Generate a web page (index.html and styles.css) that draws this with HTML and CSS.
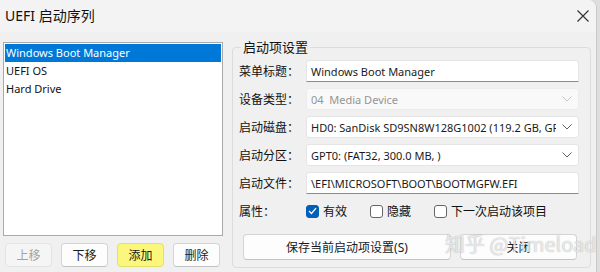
FILE: index.html
```html
<!doctype html>
<html lang="zh-CN">
<head>
  <meta charset="utf-8">
  <link rel="stylesheet" href="styles.css">
</head>
<body>

  <div class="window">
    <div class="titlebar">
      <span class="title">UEFI 启动序列</span>
      <span class="close">
        <svg width="12" height="12" viewBox="0 0 12 12"><path d="M0.5 0.5 L11.5 11.5 M11.5 0.5 L0.5 11.5" stroke="#333" stroke-width="1.2" fill="none"/></svg>
      </span>
    </div>

    <div class="main">
      <div class="left">
        <ul class="listbox">
          <li class="selected">Windows Boot Manager</li>
          <li>UEFI OS</li>
          <li>Hard Drive</li>
        </ul>
        <div class="list-buttons">
          <button class="btn" disabled>上移</button>
          <button class="btn">下移</button>
          <button class="btn btn-yellow">添加</button>
          <button class="btn">删除</button>
        </div>
      </div>

      <fieldset class="group">
        <legend>启动项设置</legend>
        <div class="form">
          <label>菜单标题：</label>
          <div class="field edit">Windows Boot Manager</div>

          <label>设备类型：</label>
          <div class="field combo disabled">04&nbsp; Media Device<span class="chev"><svg width="10" height="6" viewBox="0 0 10 6"><path d="M0.5 0.5 L5 5 L9.5 0.5" stroke="#c4c4c4" fill="none"/></svg></span></div>

          <label>启动磁盘：</label>
          <div class="field combo"><span class="clip">HD0: SanDisk SD9SN8W128G1002 (119.2 GB, GPT)</span><span class="chev"><svg width="10" height="6" viewBox="0 0 10 6"><path d="M0.5 0.5 L5 5 L9.5 0.5" stroke="#606060" fill="none"/></svg></span></div>

          <label>启动分区：</label>
          <div class="field combo">GPT0: (FAT32, 300.0 MB, )<span class="chev"><svg width="10" height="6" viewBox="0 0 10 6"><path d="M0.5 0.5 L5 5 L9.5 0.5" stroke="#606060" fill="none"/></svg></span></div>

          <label>启动文件：</label>
          <div class="field edit">\EFI\MICROSOFT\BOOT\BOOTMGFW.EFI</div>

          <label>属性：</label>
          <div class="checks">
            <span class="check"><span class="box checked"><svg width="9" height="8" viewBox="0 0 9 8"><path d="M1 4 L3.5 6.5 L8 1.2" stroke="#fff" stroke-width="1.3" fill="none"/></svg></span>有效</span>
            <span class="check"><span class="box"></span>隐藏</span>
            <span class="check"><span class="box"></span>下一次启动该项目</span>
          </div>
        </div>

        <div class="actions">
          <button class="btn btn-save">保存当前启动项设置(S)</button>
          <button class="btn btn-close">关闭</button>
        </div>
      </fieldset>
    </div>

    <div class="watermark">知乎 @Timeload</div>
  </div>

</body>
</html>
```

FILE: styles.css
```css
html, body {
  margin: 0;
  padding: 0;
  height: 100%;
  background-color: #dedede;
  font-family: "Noto Sans", "Noto Sans CJK SC", sans-serif;
  font-size: 12px;
  color: #1a1a1a;
  overflow: hidden;
}

.window {
  position: relative;
  width: 596px;
  height: 272px;
  background-color: #f0f0f0;
  border-top-right-radius: 8px;
  border-right: 1px solid #c9c9c9;
}

.titlebar {
  height: 32px;
  display: flex;
  align-items: center;
  justify-content: space-between;
  padding: 0 7px 0 5px;
  background-color: #f3f3f3;
  border-top-right-radius: 8px;
}

.title {
  font-size: 14px;
  color: #111;
  margin-top: -2px;
}

.close {
  display: flex;
  margin-top: -1px;
}

.main {
  display: flex;
  align-items: flex-start;
  padding: 0 0 0 3px;
}

.left {
  width: 220px;
  padding-top: 10px;
}

.listbox {
  list-style: none;
  margin: 0;
  padding: 1px;
  height: 190px;
  background-color: #fff;
  border: 1px solid #a9a9a9;
  font-size: 11px;
}

.listbox li {
  height: 18px;
  line-height: 18px;
  padding-left: 1px;
  color: #111;
}

.listbox li.selected {
  background-color: #0078d7;
  color: #fff;
}

.list-buttons {
  display: flex;
  gap: 9px;
  margin-top: 7px;
  padding-left: 2px;
}

.btn {
  font-family: "Noto Sans", "Noto Sans CJK SC", sans-serif;
  font-size: 12px;
  color: #1a1a1a;
  background-color: #fdfdfd;
  border: 1px solid #d4d4d4;
  border-bottom-color: #c2c2c2;
  border-radius: 4px;
  padding: 0;
  height: 24px;
  width: 47px;
}

.btn:disabled {
  color: #a3a3a3;
  background-color: #f5f5f5;
  border-color: #e3e3e3;
}

.btn-yellow {
  background-color: #fbf77c;
  border-color: #e4df6a;
}

.group {
  margin: 7px 0 0 9px;
  padding: 5px 11px 7px 6px;
  width: 340px;
  border: 1px solid #dcdcdc;
  border-radius: 4px;
}

.group legend {
  font-size: 13px;
  line-height: 16px;
  padding: 0 2px;
  margin-left: 2px;
  color: #111;
}

.form {
  display: grid;
  grid-template-columns: 67px 1fr;
  grid-auto-rows: 22px;
  row-gap: 6px;
  align-items: center;
}

.form label {
  font-size: 12px;
  color: #111;
}

.field {
  height: 22px;
  box-sizing: border-box;
  display: flex;
  align-items: center;
  padding-left: 4px;
  font-size: 11px;
  background-color: #fff;
  border: 1px solid #e5e5e5;
  border-radius: 3px;
  white-space: nowrap;
  overflow: hidden;
}

.field.edit {
  border-bottom: 1px solid #8a8a8a;
  border-radius: 3px 3px 0 0;
}

.field.combo {
  justify-content: space-between;
}

.field.disabled {
  background-color: #f9f9f9;
  border-color: #ececec;
  color: #959595;
}

.clip {
  overflow: hidden;
  white-space: nowrap;
  flex: 1;
}

.chev {
  display: flex;
  width: 22px;
  justify-content: center;
  flex-shrink: 0;
}

.checks {
  display: flex;
  gap: 23px;
  align-items: center;
}

.check {
  display: flex;
  align-items: center;
  gap: 4px;
  font-size: 12px;
  color: #111;
}

.box {
  width: 13px;
  height: 13px;
  box-sizing: border-box;
  border: 1px solid #666;
  border-radius: 3px;
  background-color: #fff;
  display: flex;
  align-items: center;
  justify-content: center;
}

.box.checked {
  background-color: #005fb8;
  border-color: #005fb8;
}

.actions {
  display: flex;
  gap: 9px;
  margin-top: 12px;
  padding-left: 4px;
}

.btn-save {
  width: 208px;
  height: 26px;
}

.btn-close {
  width: 117px;
  height: 26px;
}

.watermark {
  position: absolute;
  left: 445px;
  top: 229px;
  font-family: "Noto Sans CJK SC", sans-serif;
  font-size: 20px;
  color: rgba(255, 255, 255, 0.75);
  text-shadow: 0 0 1px rgba(90, 90, 90, 0.6);
  white-space: nowrap;
}
```
